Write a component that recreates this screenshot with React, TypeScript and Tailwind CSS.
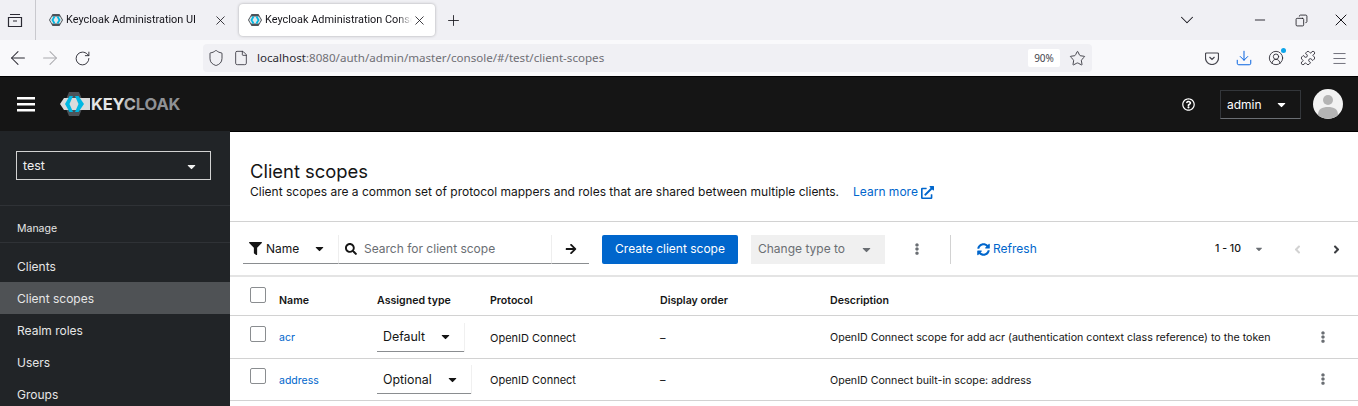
import { ArrowLeft, ArrowRight, Copy, Download, File, Minus, Plus, Puzzle, RotateCw, Shield, Star, X, ChevronDown, Menu, CircleUserRound } from "lucide-react"
import { FaAngleLeft, FaAngleRight, FaArrowRight, FaCaretDown, FaEllipsisV, FaExternalLinkAlt, FaFilter, FaRegQuestionCircle, FaSearch, FaSyncAlt } from "react-icons/fa"

const font = "font-['Inter','Noto_Sans',sans-serif]"

const Favicon = () => (
	<svg width="14" height="14" viewBox="0 0 14 14" className="shrink-0">
		<path d="M3.5 1h7L14 7l-3.5 6h-7L0 7z" fill="#4d5258" />
		<path d="M1 7l2-3.5h8L13 7l-2 3.5H3z" fill="#e3e6e8" />
		<path d="M5.5 3.5 3.5 7l2 3.5M8.5 3.5l2 3.5-2 3.5" fill="none" stroke="#00b8e3" strokeWidth="1.8" />
	</svg>
)

const LogoMark = () => (
	<svg width="30" height="26" viewBox="0 0 30 26" className="shrink-0">
		<path d="M9 1h10l5 12-5 12H9L4 13z" fill="#4d5258" />
		<path d="M0 13l4-6h26v12H4z" fill="#d9dbdc" />
		<path d="M9.500 5 5 13l4.500 8H13L9.500 13 13 5zM15 5l3.500 8L15 21h3.500L24 13 18.500 5z" fill="#00b8e3" />
	</svg>
)

const Tab = ({ title, active }: { title: string, active?: boolean }) => (
	<div className={ `flex items-center h-[32px] rounded-[4px] pl-[9px] ${ active ? 'w-[196px] bg-white shadow-[0_0_3px_rgba(0,0,0,0.3)]' : 'w-[199px]' }` }>
		<Favicon />
		<span className="ml-[3px] text-[10.9px] font-['Roboto',sans-serif] text-[#15141a] whitespace-nowrap overflow-hidden w-[147px] [mask-image:linear-gradient(to_right,black_90%,transparent)]">{ title }</span>
		<X size={ 15 } strokeWidth={ 1.3 } className="text-[#15141a]" />
	</div>
)

const TabBar = () => (
	<div className="flex items-center h-[40px] bg-[#f0f0f4]">
		<div className="w-[36px] h-full flex items-center justify-center pr-[5px] border-r border-[#c9c9ce]">
			<svg width="16" height="15" viewBox="0 0 16 15" fill="none" stroke="#2b2a33" strokeWidth="1.2">
				<path d="M3 1.500h10M1.500 4.500h13v9h-13zM6 8h4" />
			</svg>
		</div>
		<div className="flex items-center ml-[4px]">
			<Tab title="Keycloak Administration UI" />
			<Tab title="Keycloak Administration Console" active />
		</div>
		<Plus size={ 17 } strokeWidth={ 1.2 } className="ml-[10px] text-[#15141a]" />
		<ChevronDown size={ 22 } strokeWidth={ 1.1 } className="ml-[714px] text-[#15141a]" />
		<Minus size={ 16 } strokeWidth={ 1.3 } className="ml-[54px] text-[#15141a]" />
		<Copy size={ 13 } strokeWidth={ 1.5 } className="ml-[27px] text-[#15141a] -scale-x-100" />
		<X size={ 20 } strokeWidth={ 1.2 } className="ml-[23px] text-[#15141a]" />
	</div>
)

const NavBar = () => (
	<div className="flex items-center h-[36px] bg-[#f9f9fb] text-[#2b2a33]">
		<ArrowLeft size={ 22 } strokeWidth={ 1.1 } className="ml-[7px]" />
		<ArrowRight size={ 22 } strokeWidth={ 1.1 } className="ml-[10px] text-[#a9a9ad]" />
		<RotateCw size={ 17 } strokeWidth={ 1.3 } className="ml-[13px]" />
		<div className="ml-[112px] w-[889px] h-[28px] bg-[#f0f0f4] rounded-[4px] flex items-center">
			<Shield size={ 18 } strokeWidth={ 1.1 } className="ml-[4px]" />
			<File size={ 16 } strokeWidth={ 1.2 } className="ml-[8px]" />
			<span className="ml-[8px] text-[11.6px] whitespace-nowrap">localhost<span className="text-[#6f6f75]">:8080/auth/admin/master/console/#/test/client-scopes</span></span>
			<div className="ml-auto flex items-center">
				<div className="w-[32px] h-[18px] bg-white rounded-[2px] text-[10px] flex items-center justify-center text-[#45454d]">90%</div>
				<Star size={ 17 } strokeWidth={ 1.2 } className="ml-[9px] mr-[6px]" />
			</div>
		</div>
		<svg width="14" height="13" viewBox="0 0 14 13" fill="none" stroke="#45454d" strokeWidth="1.2" className="ml-[113px]">
			<path d="M1.500 1h11a1 1 0 0 1 1 1v4a6.500 6.500 0 0 1-13 0V2a1 1 0 0 1 .9-1zM4.500 5l2.500 2.500L9.500 5" />
		</svg>
		<Download size={ 18 } strokeWidth={ 1.3 } className="ml-[16px] text-[#0060df]" />
		<div className="relative ml-[15px]">
			<CircleUserRound size={ 16 } strokeWidth={ 1.3 } />
			<span className="absolute -top-[2px] -right-[2px] w-[5px] h-[5px] rounded-full bg-[#0ea5e9]" />
		</div>
		<Puzzle size={ 16 } strokeWidth={ 1.3 } className="ml-[16px]" />
		<Menu size={ 17 } strokeWidth={ 1.2 } className="ml-[15px] text-[#5b5b66]" />
	</div>
)

const Masthead = () => (
	<div className={ `flex items-center h-[55px] bg-[#151515] border-t border-[#000] text-white ${ font }` }>
		<svg width="18" height="15" viewBox="0 0 18 15" fill="white" className="ml-[17px]">
			<path d="M0 0h18v2.500H0zM0 6h18v2.500H0zM0 12h18v2.500H0z" />
		</svg>
		<div className="flex items-center ml-[25px]">
			<LogoMark />
			<span className="ml-[1px] text-[16.5px] font-bold tracking-[-0.15px] text-[#e4e5e6]">KEY<span className="text-[#b4b5b7]">C</span><span className="text-[#8f9194]">LOAK</span></span>
		</div>
		<FaRegQuestionCircle size={ 13 } className="ml-auto" />
		<div className="ml-[25px] w-[81px] h-[29px] border border-[#33363a] border-b-[#6a6e73] flex items-center pl-[6px] pt-[1px] text-[12px]">
			admin
			<FaCaretDown size={ 13 } className="ml-auto mr-[12px]" />
		</div>
		<svg width="30" height="30" viewBox="0 0 30 30" className="ml-[12px] mr-[15px]">
			<circle cx="15" cy="15" r="15" fill="#f2f2f2" />
			<circle cx="15" cy="11" r="5" fill="#b4b4b4" />
			<path d="M5 26c0-6 4-8 10-8s10 2 10 8a15 15 0 0 1-20 0z" fill="#b4b4b4" />
		</svg>
	</div>
)

const navItems = ['Clients', 'Client scopes', 'Realm roles', 'Users', 'Groups']

const Sidebar = () => (
	<div className="w-[230px] shrink-0 bg-[#212427] text-white flex flex-col overflow-hidden">
		<div className="h-[75px] shrink-0 pt-[20px] px-[16px] border-b border-[#2f3236]">
			<div className="w-[195px] h-[29px] border border-[#d2d2d2] flex items-center pl-[6px] pt-[1px] text-[12.5px] text-[#f0f0f0]">
				test
				<FaCaretDown size={ 13 } className="ml-auto mr-[12px]" />
			</div>
		</div>
		<div className="h-[37px] shrink-0 flex items-center pl-[17px] pt-[10px] text-[10.5px] border-b border-[#2f3236] text-[#e6e6e6]">Manage</div>
		<div className="pt-[7px] shrink-0">
			{ navItems.map((item) => (
				<div key={ item } className={ `h-[32px] flex items-center pl-[17px] pt-[1px] text-[12px] text-[#e6e6e6] ${ item === 'Client scopes' ? 'bg-[#4f5255]' : '' }` }>{ item }</div>
			)) }
		</div>
	</div>
)

const Checkbox = () => <div className="w-[16px] h-[16px] rounded-[2px] border border-[#8a8d90] bg-white" />

const rows = [
	{ name: 'acr', type: 'Default', selectW: 'w-[87px]', height: 'h-[43px]', desc: 'OpenID Connect scope for add acr (authentication context class reference) to the token' },
	{ name: 'address', type: 'Optional', selectW: 'w-[94px]', height: 'h-[42px]', desc: 'OpenID Connect built-in scope: address' },
]

const grid = "grid grid-cols-[29px_98px_113px_170px_170px_1fr] items-center pl-[20px] border-b border-[#d2d2d2]"

const Toolbar = () => (
	<div className="h-[55px] flex items-center pl-[13px] pt-[1px] border-b-2 border-[#e4e4e4] text-[12px]">
		<div className="w-[95px] h-[29px] flex items-center pl-[6px] border-b border-[#8a8d90] text-[#151515]">
			<FaFilter size={ 13 } />
			<span className="ml-[4px]">Name</span>
			<FaCaretDown size={ 13 } className="ml-auto mr-[12px]" />
		</div>
		<div className="w-[213px] h-[29px] flex items-center pl-[6px] border-b border-l border-[#8a8d90] border-l-[#eee] text-[#6a6e73]">
			<FaSearch size={ 12 } className="text-[#151515]" />
			<span className="ml-[7px]">Search for client scope</span>
		</div>
		<div className="w-[38px] h-[29px] flex items-center justify-center border-b border-l border-[#8a8d90] border-l-[#eee]">
			<FaArrowRight size={ 12 } className="text-[#151515]" />
		</div>
		<div className="ml-[13px] w-[136px] h-[29px] rounded-[2px] bg-[#0066cc] text-white flex items-center justify-center">Create client scope</div>
		<div className="ml-[13px] w-[134px] h-[29px] bg-[#f0f0f0] text-[#6a6e73] flex items-center pl-[7px]">
			Change type to
			<FaCaretDown size={ 13 } className="ml-auto mr-[12px]" />
		</div>
		<FaEllipsisV size={ 12 } className="ml-[26px] text-[#6a6e73]" />
		<div className="ml-[27px] h-[29px] border-l border-[#d2d2d2]" />
		<FaSyncAlt size={ 13 } className="ml-[26px] text-[#0066cc]" />
		<span className="ml-[3px] text-[#0066cc]">Refresh</span>
		<span className="ml-auto text-[#151515] text-[10.5px] font-medium">1 - 10</span>
		<FaCaretDown size={ 10 } className="ml-[13px] text-[#6a6e73]" />
		<FaAngleLeft size={ 13 } className="ml-[27px] text-[#d2d2d2]" />
		<FaAngleRight size={ 13 } className="ml-[26px] mr-[15px] text-[#3c3f42]" />
	</div>
)

const ScopeTable = () => (
	<div className="text-[#151515]">
		<div className={ `${ grid } h-[39px] font-semibold text-[10.6px]` }>
			<div className="-mt-[3px]"><Checkbox /></div>
			<div className="mt-[9px]">Name</div>
			<div className="mt-[9px]">Assigned type</div>
			<div className="mt-[9px]">Protocol</div>
			<div className="mt-[9px]">Display order</div>
			<div className="mt-[9px]">Description</div>
		</div>
		{ rows.map((row) => (
			<div key={ row.name } className={ `${ grid } ${ row.height }` }>
				<div className="-mt-[7px]"><Checkbox /></div>
				<div className="mt-[2px] text-[10.5px] text-[#0066cc]">{ row.name }</div>
				<div>
					<div className={ `${ row.selectW } h-[29px] flex items-center pl-[6px] text-[12.4px] border-b border-[#8a8d90] shadow-[1px_0_0_#f0f0f0]` }>
						<span className="mt-[2px]">{ row.type }</span>
						<FaCaretDown size={ 13 } className="ml-auto mr-[12px]" />
					</div>
				</div>
				<div className="mt-[2px] text-[11px]">OpenID Connect</div>
				<div className="mt-[2px] text-[11px]">–</div>
				<div className="flex items-center text-[10.65px]">
					<span className="mt-[2px]">{ row.desc }</span>
					<FaEllipsisV size={ 12 } className="ml-auto mr-[29px] text-[#6a6e73]" />
				</div>
			</div>
		)) }
	</div>
)

export default function App() {
	return (
		<div className="w-[1358px] h-[406px] overflow-hidden bg-white font-['Noto_Sans',sans-serif]">
			<TabBar />
			<NavBar />
			<Masthead />
			<div className={ `flex h-[275px] ${ font }` }>
				<Sidebar />
				<div className="flex-1 border-t border-[#000] min-w-0">
					<div className="h-[90px] pl-[20px] pt-[27px] border-b border-[#d2d2d2]">
						<h1 className="text-[18.4px] leading-[24px] text-[#151515]">Client scopes</h1>
						<p className="text-[12px] text-[#151515] leading-[18px] flex items-center">
							Client scopes are a common set of protocol mappers and roles that are shared between multiple clients.
							<span className="ml-[14px] text-[#0066cc]">Learn more</span>
							<FaExternalLinkAlt size={ 13 } className="ml-[3px] text-[#0066cc]" />
						</p>
					</div>
					<Toolbar />
					<ScopeTable />
				</div>
			</div>
		</div>
	)
}
